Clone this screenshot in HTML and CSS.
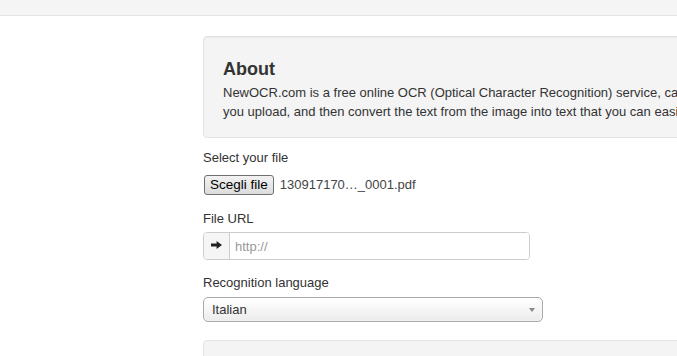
FILE: index.html
```html
<!DOCTYPE html>
<html lang="en">
<head>
<meta charset="utf-8">
<title>NewOCR.com</title>
<link rel="stylesheet" href="styles.css">
</head>
<body>
<div class="topbar"></div>
<main class="page">
  <section class="about">
    <h4 class="about-title">About</h4>
    <p class="about-text">NewOCR.com is a free online OCR (Optical Character Recognition) service, can analyze the text in any image file that<br>you upload, and then convert the text from the image into text that you can easily edit on your computer.</p>
  </section>

  <form class="upload-form">
    <label class="field-label">Select your file</label>
    <div class="file-row">
      <button type="button" class="file-button">Scegli file</button>
      <span class="file-name">130917170…_0001.pdf</span>
    </div>

    <label class="field-label">File URL</label>
    <div class="input-group">
      <span class="add-on">
        <svg width="11" height="8" viewBox="0 0 11 8" aria-hidden="true"><path d="M0 2.5h5.6V0L11 4 5.6 8V5.5H0z" fill="#222"/></svg>
      </span>
      <input class="url-input" type="text" placeholder="http://">
    </div>

    <label class="field-label">Recognition language</label>
    <div class="select-wrap">
      <select class="lang-select">
        <option>Italian</option>
      </select>
    </div>
  </form>

  <section class="bottom-well"></section>
</main>
</body>
</html>
```

FILE: styles.css
```css
html, body {
  margin: 0;
  padding: 0;
  overflow: hidden;
}

body {
  font-family: "Liberation Sans", Arial, sans-serif;
  font-size: 13px;
  line-height: 20px;
  color: #333;
  background: #fff;
}

.topbar {
  height: 15px;
  background: #f5f5f5;
  border-bottom: 1px solid #e3e3e3;
}

.page {
  padding: 20px 0 0 203px;
}

.about {
  width: 900px;
  box-sizing: border-box;
  background: #f4f4f4;
  border: 1px solid #e3e3e3;
  border-radius: 4px;
  box-shadow: inset 0 1px 1px rgba(0, 0, 0, 0.05);
  padding: 22px 19px 16px;
}

.about-title {
  margin: 0 0 4px;
  font-size: 18px;
  line-height: 20px;
  font-weight: bold;
  color: #333;
}

.about-text {
  margin: 0;
  line-height: 19px;
  white-space: nowrap;
}

.upload-form {
  margin-top: 10px;
}

.field-label {
  display: block;
  line-height: 20px;
  margin-bottom: 7px;
}

.file-row {
  display: flex;
  align-items: center;
  height: 20px;
  margin-bottom: 14px;
}

.file-button {
  margin: 0 6px 0 1px;
  height: 20px;
  padding: 0 5px;
  font-family: "Liberation Sans", Arial, sans-serif;
  font-size: 13.5px;
  line-height: 18px;
  color: #000;
  background: linear-gradient(#f2f2f2, #dcdcdc);
  border: 1px solid #707070;
  border-radius: 3px;
}

.file-name {
  color: #444;
}

.input-group {
  display: flex;
  width: 327px;
  height: 28px;
  margin-top: -4px;
  margin-bottom: 13px;
  box-sizing: border-box;
  border: 1px solid #ccc;
  border-radius: 4px;
  overflow: hidden;
}

.add-on {
  display: flex;
  align-items: center;
  justify-content: center;
  width: 26px;
  padding-bottom: 3px;
  box-sizing: border-box;
  background: #f5f5f5;
  border-right: 1px solid #ccc;
}

.url-input {
  flex: 1;
  border: 0;
  outline: none;
  padding: 0 5px;
  font-family: "Liberation Sans", Arial, sans-serif;
  font-size: 13px;
  color: #555;
  background: #fff;
}

.url-input::placeholder {
  color: #999;
}

.select-wrap {
  position: relative;
  width: 340px;
  margin-top: -3px;
}

.select-wrap::after {
  content: "";
  position: absolute;
  right: 8px;
  top: 11px;
  border-left: 3.5px solid transparent;
  border-right: 3.5px solid transparent;
  border-top: 4px solid #888;
  pointer-events: none;
}

.lang-select {
  appearance: none;
  -webkit-appearance: none;
  display: block;
  width: 100%;
  height: 25px;
  padding: 0 8px;
  font-family: "Liberation Sans", Arial, sans-serif;
  font-size: 13px;
  color: #333;
  background: linear-gradient(#ffffff, #ececec);
  border: 1px solid #aaa;
  border-radius: 5px;
  box-shadow: inset 0 0 2px #fff;
}

.bottom-well {
  width: 900px;
  height: 40px;
  margin-top: 18px;
  background: #f4f4f4;
  border: 1px solid #e3e3e3;
  border-radius: 4px;
}
```
